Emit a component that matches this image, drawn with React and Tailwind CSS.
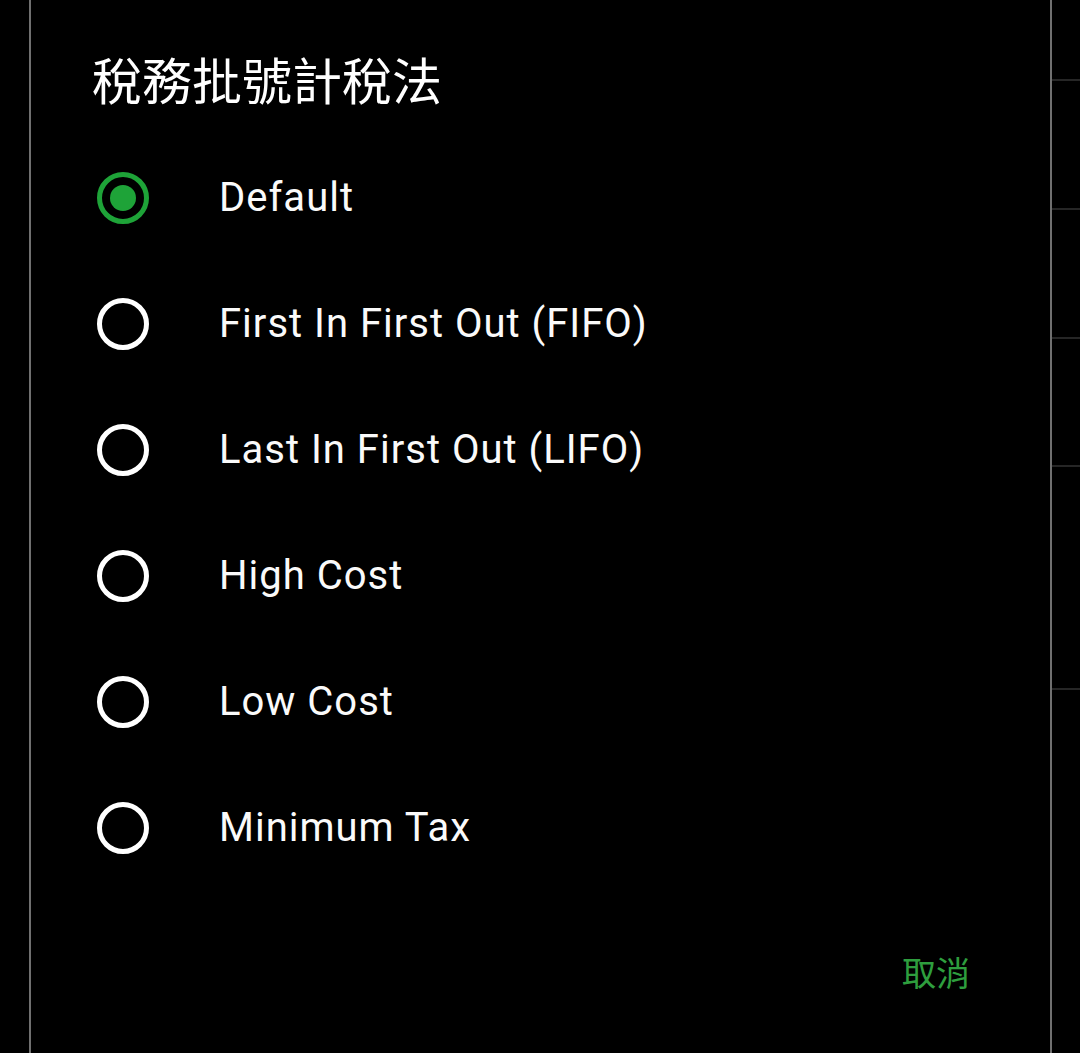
import React from "react";

const options = [
  "Default",
  "First In First Out (FIFO)",
  "Last In First Out (LIFO)",
  "High Cost",
  "Low Cost",
  "Minimum Tax",
];

function Radio({ checked }) {
  return (
    <div
      className={
        "w-[52px] h-[52px] rounded-full border-[5px] flex items-center justify-center " +
        (checked ? "border-[#1ea338]" : "border-white")
      }
    >
      {checked && <div className="w-[26px] h-[26px] rounded-full bg-[#1ea338]" />}
    </div>
  );
}

export default function App() {
  return (
    <div className="w-[1080px] h-[1053px] bg-black flex overflow-hidden" style={{ fontFamily: "Roboto, 'Noto Sans CJK TC', sans-serif" }}>
      <div className="w-[29px] shrink-0" />
      <div className="w-[1023px] shrink-0 border-l-2 border-r-2 border-[#707070] flex flex-col pt-[53px]">
        <div
          className="pl-[61px] text-[50px] leading-[50px] text-white"
          style={{ fontFamily: "'Noto Sans CJK TC', sans-serif" }}
        >
          稅務批號計稅法
        </div>
        <div className="mt-[32px] flex flex-col">
          {options.map((o, i) => (
            <div key={o} className="h-[126px] flex items-center pl-[66px]">
              <Radio checked={i === 0} />
              <span className="ml-[70px] text-[40px] text-[#fafafa] tracking-[1px]">{o}</span>
            </div>
          ))}
        </div>
        <div className="flex justify-end pr-[80px] mt-[61px]">
          <span
            className="text-[34px] leading-[40px] text-[#2e9e3e]"
            style={{ fontFamily: "'Noto Sans CJK TC', sans-serif" }}
          >
            取消
          </span>
        </div>
      </div>
      <div className="flex-1 flex flex-col">
        <div className="h-[81px] border-b-2 border-[#262626]" />
        <div className="h-[129px] border-b-2 border-[#262626]" />
        <div className="h-[129px] border-b-2 border-[#262626]" />
        <div className="h-[128px] border-b-2 border-[#262626]" />
        <div className="h-[223px] border-b-2 border-[#262626]" />
      </div>
    </div>
  );
}
